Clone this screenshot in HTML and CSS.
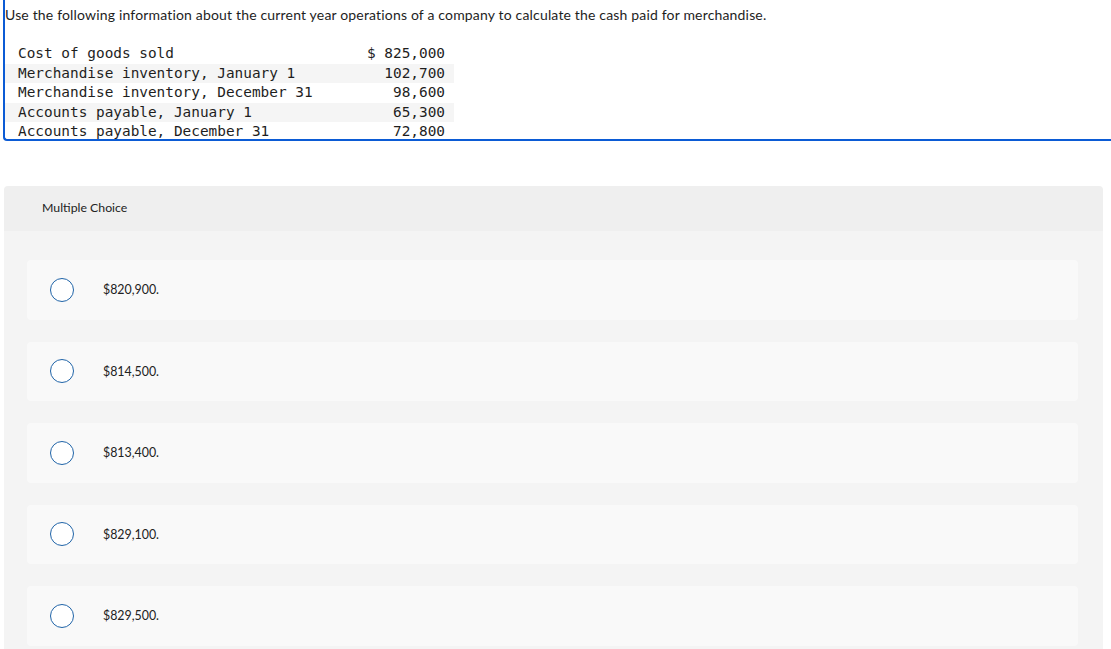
FILE: index.html
```html
<!DOCTYPE html>
<html>
<head>
<meta charset="utf-8">
<link rel="stylesheet" href="styles.css">
</head>
<body>
<div class="question">
  <p class="prompt">Use the following information about the current year operations of a company to calculate the cash paid for merchandise.</p>
  <table class="data">
    <tr><td class="label">Cost of goods sold</td><td class="num">$ 825,000</td></tr>
    <tr class="alt"><td class="label">Merchandise inventory, January 1</td><td class="num">102,700</td></tr>
    <tr><td class="label">Merchandise inventory, December 31</td><td class="num">98,600</td></tr>
    <tr class="alt"><td class="label">Accounts payable, January 1</td><td class="num">65,300</td></tr>
    <tr><td class="label">Accounts payable, December 31</td><td class="num">72,800</td></tr>
  </table>
</div>

<div class="mc">
  <div class="mc-head">Multiple Choice</div>
  <div class="mc-body">
    <div class="option"><span class="radio"></span><span class="opt-text">$820,900.</span></div>
    <div class="option"><span class="radio"></span><span class="opt-text">$814,500.</span></div>
    <div class="option"><span class="radio"></span><span class="opt-text">$813,400.</span></div>
    <div class="option"><span class="radio"></span><span class="opt-text">$829,100.</span></div>
    <div class="option"><span class="radio"></span><span class="opt-text">$829,500.</span></div>
  </div>
</div>
</body>
</html>
```

FILE: styles.css
```css
html, body {
  margin: 0;
  padding: 0;
  background: #ffffff;
  overflow: hidden;
}

body {
  font-family: Lato, "Liberation Sans", sans-serif;
  color: #222222;
  width: 1111px;
}

.question {
  margin-left: 3px;
  border-left: 2px solid #0b5bd5;
  border-bottom: 2px solid #0b5bd5;
  border-bottom-left-radius: 4px;
  height: 139px;
  box-sizing: content-box;
}

.prompt {
  margin: 0;
  padding-top: 7px;
  font-size: 14px;
  line-height: 16px;
  letter-spacing: 0.17px;
  color: #1e1e1e;
}

.data {
  margin-top: 21px;
  border-collapse: collapse;
  font-family: "DejaVu Sans Mono", "Liberation Mono", monospace;
  font-size: 14.4px;
  color: #1e1e1e;
  width: 449px;
}

.data td {
  padding: 0;
  height: 19.5px;
  line-height: 19.5px;
  white-space: nowrap;
}

.data .label {
  padding-left: 13px;
}

.data .num {
  text-align: right;
  padding-right: 9px;
}

.data .alt td {
  background: #f5f5f5;
}

.mc {
  margin: 45px 0 0 4px;
  width: 1099px;
  border-radius: 4px 4px 0 0;
  overflow: hidden;
}

.mc-head {
  background: #efefef;
  height: 45px;
  display: flex;
  align-items: center;
  padding-left: 38px;
  padding-bottom: 2px;
  box-sizing: border-box;
  font-size: 12.3px;
  color: #222222;
}

.mc-body {
  background: #f4f4f4;
  padding: 29px 25px 20px 23px;
  display: flex;
  flex-direction: column;
  gap: 22px;
}

.option {
  background: #f9f9f9;
  border-radius: 4px;
  height: 59.5px;
  display: flex;
  align-items: center;
  padding-left: 23px;
}

.radio {
  width: 24px;
  height: 24px;
  box-sizing: border-box;
  border: 1.5px solid #2064a8;
  border-radius: 50%;
  background: #ffffff;
  flex: none;
}

.opt-text {
  margin-left: 29px;
  font-size: 12.4px;
  color: #222222;
}
```
